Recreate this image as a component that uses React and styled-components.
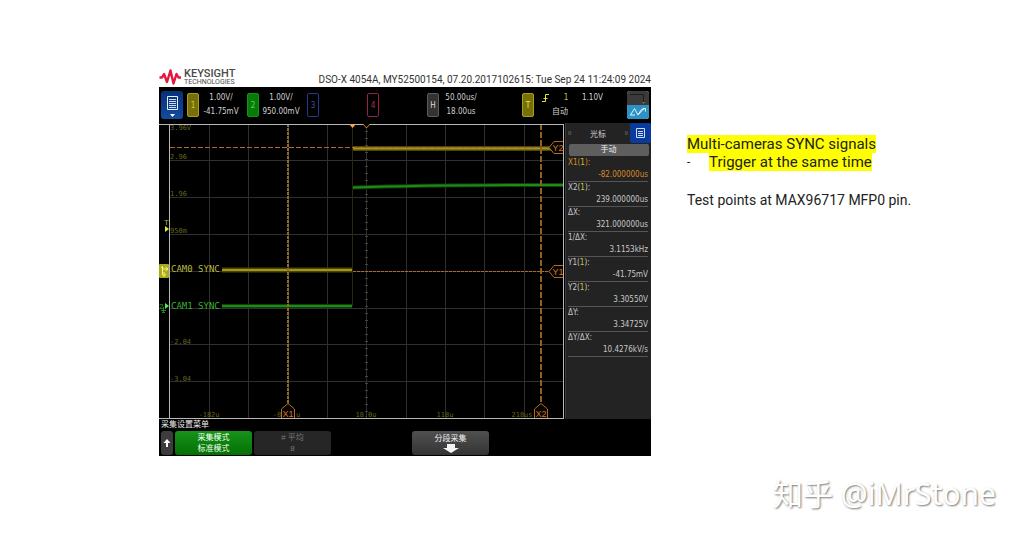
import React from "react";
import styled, { createGlobalStyle } from "styled-components";

const yLabels = [
  { y: 130, text: "3.96V" },
  { y: 159, text: "2.96" },
  { y: 196, text: "1.96" },
  { y: 233, text: "950m" },
  { y: 344, text: "-2.04" },
  { y: 381, text: "-3.04" },
];

/* the second label is cut by the X1 flag */
const xLabels = [
  { x: 209, text: "-182u" },
  { x: 277, text: "-8" },
  { x: 298, text: "u" },
  { x: 366, text: "18.0u" },
  { x: 445, text: "118u" },
  { x: 522, text: "218us" },
];

const measures = [
  { name: "X1", channel: true, value: "-82.000000us", active: true },
  { name: "X2", channel: true, value: "239.000000us" },
  { name: "ΔX", value: "321.000000us" },
  { name: "1/ΔX", value: "3.1153kHz" },
  { name: "Y1", channel: true, value: "-41.75mV" },
  { name: "Y2", channel: true, value: "3.30550V" },
  { name: "ΔY", value: "3.34725V" },
  { name: "ΔY/ΔX", value: "10.4276kV/s" },
];

const Waveform = () => (
  <StPlot viewBox="159 123 406 296" role="img" aria-label="CAM0 / CAM1 SYNC">
    {/* grid */}
    <g stroke="#2f2f2f">
      {[209, 248, 288, 327, 366, 406, 445, 484, 524].map((x) => (
        <path key={x} d={`M${x}.5 124V418`} />
      ))}
      {[160, 197, 234, 271, 308, 344, 381].map((y) => (
        <path key={y} d={`M170 ${y}.5H563`} />
      ))}
    </g>
    <path d="M366.5 124V418" stroke="#444" strokeWidth="3" strokeDasharray="1 6" />
    <path d="M352.5 124V306" stroke="#2c2610" />

    {/* axis labels */}
    <g fill="#66661a" fontSize="7" fontFamily='"DejaVu Sans Mono", monospace'>
      {yLabels.map(({ y, text }) => (
        <text key={text} x="170" y={y}>
          {text}
        </text>
      ))}
      {xLabels.map(({ x, text }) => (
        <text key={text} x={x} y="417" textAnchor="middle">
          {text}
        </text>
      ))}
    </g>

    {/* channel 1 */}
    <g fill="none" stroke="#4d4708" strokeWidth="5">
      <path d="M222 270H352M353 148.500H556" />
    </g>
    <g fill="none" stroke="#a2951d" strokeWidth="2">
      <path d="M222 270H352M353 148.500H556" />
    </g>

    {/* channel 2 */}
    <g fill="none" stroke="#0d4209" strokeWidth="4">
      <path d="M222 306H352M353 187.500C400 186 460 185 563 185" />
    </g>
    <g fill="none" stroke="#1f8a18" strokeWidth="2">
      <path d="M222 306H352M353 187.500C400 186 460 185 563 185" />
    </g>

    {/* cursors */}
    <g stroke="#b0682a" fill="none">
      <path d="M170 147.500H549" strokeDasharray="5 2" />
      <path d="M353 271.500H549" strokeDasharray="3 1" />
      <path d="M288 124V404" stroke="#8f6c2c" strokeWidth="2" strokeDasharray="3 1" />
      <path d="M541 124V404" stroke="#8f6220" strokeWidth="2" strokeDasharray="6 2" />
    </g>
    <g fill="#080400" stroke="#b56a24">
      <path d="M563 141.500H554L549 147.500L554 153.500H563" />
      <path d="M563 265.500H554L549 271.500L554 277.500H563" />
      <path d="M281.500 418V409L288 403.500L294.500 409V418" />
      <path d="M534.500 418V409L541 403.500L547.500 409V418" />
    </g>
    <g fill="#c8782c" fontSize="9" textAnchor="middle">
      <text x="558" y="151">Y2</text>
      <text x="558" y="275">Y1</text>
      <text x="288" y="417">X1</text>
      <text x="541" y="417">X2</text>
    </g>

    {/* frame and trigger marks */}
    <path d="M159 124.500H564M159 418.500H564" stroke="#b8b8b8" />
    <path d="M169.500 124V419M563.500 124V419" stroke="#b8b8b8" />
    <path d="M349 124H356L352.500 128Z" fill="#f2a64a" />
    <path d="M363 124L366.500 128L370 124" fill="#000" stroke="#c88a3c" />

    {/* level marks */}
    <g fontSize="8">
      <text x="164" y="225" fill="#b5b52e">T</text>
      <path d="M165 226L169 229L165 232Z" fill="#e6e635" />
      <rect x="159" y="264" width="10" height="14" rx="1" fill="#a9a91a" />
      <path
        d="M161 268L162.500 266.500V274M162.500 269H168M165.500 267L168 269L165.500 271M164 272V276M162 274L164 276.500L166 274"
        fill="none"
        stroke="#f4f48a"
      />
      <text x="159" y="309" fill="#2ca42c">2</text>
      <path d="M165 303L169 306L165 309Z" fill="#59e659" />
      <path d="M163.500 307V312M161 310.500H166M162 312.500H165" stroke="#1f8a1f" fill="none" />
    </g>
    <g fontSize="9" fontFamily='"DejaVu Sans Mono", monospace'>
      <text x="171" y="272" fill="#b8b83c">CAM0 SYNC</text>
      <text x="171" y="309" fill="#34b034">CAM1 SYNC</text>
    </g>
  </StPlot>
);

const App = () => {
  return (
    <>
      <GlobalStyle />
      <StPage>
        <StSlide>
          <StScope>
            <StBrandBar>
              <StBrand>
                <svg width="22" height="16" viewBox="0 0 22 16" aria-hidden="true">
                  <path
                    d="M0.500 8.500H3L5 5L8 13L11.500 1.500L14.500 14.500L17.500 5L19.500 8.500H22"
                    fill="none"
                    stroke="#e2183f"
                    strokeWidth="2.400"
                    strokeLinejoin="round"
                  />
                </svg>
                <StBrandText>
                  <StBrandName>KEYSIGHT</StBrandName>
                  <StBrandSub>TECHNOLOGIES</StBrandSub>
                </StBrandText>
              </StBrand>
              <StSerial>
                DSO-X 4054A, MY52500154, 07.20.2017102615: Tue Sep 24 11:24:09 2024
              </StSerial>
            </StBrandBar>

            <StScreen>
              <StStatusBar>
                <StMenuBtn aria-label="menu">
                  <svg width="22" height="28" viewBox="0 0 22 28" aria-hidden="true">
                    <path d="M6.500 5.500H16.500V18.500H6.500Z" fill="none" stroke="#e8f0ff" />
                    <path
                      d="M8 8.500H15M8 10.500H15M8 12.500H15M8 14.500H15M8 16.500H15"
                      stroke="#cfdcf5"
                    />
                    <path d="M9 23H14L11.500 26Z" fill="#fff" />
                  </svg>
                </StMenuBtn>
                <StChannel $bg="#77700a" $line="#a8a01c" $color="#cfc92c">1</StChannel>
                <StReading>
                  <span>1.00V/</span>
                  <span>-41.75mV</span>
                </StReading>
                <StChannel $bg="#077a07" $line="#149414" $color="#58d858">2</StChannel>
                <StReading>
                  <span>1.00V/</span>
                  <span>950.00mV</span>
                </StReading>
                <StChannel $line="#26388c" $color="#3a50b0">3</StChannel>
                <StSpace $width="44px" />
                <StChannel $line="#96204c" $color="#b02a5c">4</StChannel>
                <StSpace $width="44px" />
                <StChannel $bg="#333" $line="#5c5c5c" $color="#ddd">H</StChannel>
                <StReading>
                  <span>50.00us/</span>
                  <span>18.00us</span>
                </StReading>
                <StSpace />
                <StChannel $bg="#77700a" $line="#a8a01c" $color="#e6e635">T</StChannel>
                <StTrigger>
                  <svg width="8" height="10" viewBox="0 0 8 10" aria-label="rising edge">
                    <path
                      d="M0 8.500H3.500V1.500H7M1.500 5.500H5.500"
                      fill="none"
                      stroke="#e6e635"
                    />
                  </svg>
                  <StTriggerSource>1</StTriggerSource>
                  <span>1.10V</span>
                  <StTriggerMode>自动</StTriggerMode>
                </StTrigger>
                <StViewBtn aria-label="view">
                  <svg width="22" height="28" viewBox="0 0 22 28" aria-hidden="true">
                    <path d="M0 0H22V14H0Z" fill="#3a3a3a" />
                    <path d="M3 3.500H16.500V11" fill="none" stroke="#1c1c1c" />
                    <path d="M15 11L18 11L16.500 13Z" fill="#8a7430" />
                    <path d="M0 14H22V28H0Z" fill="#2e93c4" />
                    <path
                      d="M3.500 24L7.500 17.500L11 24L14 19L18 17.500M3 24H8M11 24L16.500 18M15.500 17.500H18.500V20.500"
                      fill="none"
                      stroke="#d8f2ff"
                    />
                  </svg>
                </StViewBtn>
              </StStatusBar>

              <StMain>
                <Waveform />
                <StSide>
                  <StSideHead>
                    <StSideTitle>
                      <StGrip>II</StGrip>
                      <span>光标</span>
                      <StGrip>II</StGrip>
                    </StSideTitle>
                    <StListBtn aria-label="list">
                      <svg width="10" height="10" viewBox="0 0 10 10" aria-hidden="true">
                        <path
                          d="M0.500 0.500H8.500V9.500H0.500ZM2 3.500H7M2 5.500H7M2 7.500H7"
                          fill="none"
                          stroke="#cfdcff"
                        />
                      </svg>
                    </StListBtn>
                  </StSideHead>
                  <StModeBtn>手动</StModeBtn>
                  <StMeasures>
                    {measures.map(({ name, channel, value, active }) => (
                      <StMeasure key={name} $active={active}>
                        <dt>
                          {name}
                          {channel && (
                            <>
                              (<StChannelNo>1</StChannelNo>)
                            </>
                          )}
                          :
                        </dt>
                        <dd>{value}</dd>
                      </StMeasure>
                    ))}
                  </StMeasures>
                </StSide>
              </StMain>

              <StMenuTitle>采集设置菜单</StMenuTitle>
              <StSoftKeys>
                <StUpKey aria-label="up">
                  <svg width="8" height="8" viewBox="0 0 8 8" aria-hidden="true">
                    <path d="M4 0L7.500 4H5V8H3V4H0.500Z" fill="#fff" />
                  </svg>
                </StUpKey>
                <StSoftKey $variant="on">
                  <span>采集模式</span>
                  <span>标准模式</span>
                </StSoftKey>
                <StSoftKey $variant="off">
                  <span># 平均</span>
                  <span>8</span>
                </StSoftKey>
                <StEmptyKey />
                <StSoftKey>
                  <span>分段采集</span>
                  <svg width="16" height="9" viewBox="0 0 16 9" aria-hidden="true">
                    <path d="M4 0H12V4H16L8 9L0 4H4Z" fill="#f4f4f4" />
                  </svg>
                </StSoftKey>
              </StSoftKeys>
            </StScreen>
          </StScope>

          <StNotes>
            <p>
              <StMark>Multi-cameras SYNC signals</StMark>
            </p>
            <StNoteItem>
              <StDash>-</StDash>
              <StMark>Trigger at the same time</StMark>
            </StNoteItem>
            <StNoteText>Test points at MAX96717 MFP0 pin.</StNoteText>
          </StNotes>
        </StSlide>
        <StWatermark>知乎 @iMrStone</StWatermark>
      </StPage>
    </>
  );
};

export default App;

const GlobalStyle = createGlobalStyle`
  * {
    box-sizing: border-box;
    margin: 0;
    padding: 0;
  }

  body {
    background: #fff;
    font-family: "Liberation Sans", "Noto Sans CJK SC", sans-serif;
  }

  button {
    border: none;
    font: inherit;
    cursor: pointer;
  }

  svg {
    display: block;
  }
`;

const StPage = styled.div`
  padding: 66px 24px 0 159px;
`;

const StSlide = styled.div`
  display: grid;
  grid-template-columns: minmax(0, 492px) 1fr;
  column-gap: 36px;
`;

const StScope = styled.section`
  color: #d2d2d2;
`;

const StBrandBar = styled.header`
  height: 21px;
  display: flex;
  justify-content: space-between;
  align-items: center;
`;

const StBrand = styled.div`
  display: flex;
  align-items: center;
  column-gap: 3px;
`;

const StBrandText = styled.div`
  display: flex;
  flex-flow: column;
  color: #4a4a4a;
`;

const StBrandName = styled.b`
  font: 500 11px/10px Roboto, sans-serif;
`;

const StBrandSub = styled.span`
  font: 400 7px/6px Roboto, sans-serif;
`;

const StSerial = styled.p`
  align-self: flex-end;
  color: #333;
  font-family: Roboto, sans-serif;
  font-size: 10px;
  line-height: 14px;
  white-space: nowrap;
`;

const StScreen = styled.div`
  background: #000;
`;

const StStatusBar = styled.div`
  height: 36px;
  display: flex;
  align-items: center;
  padding: 0 2px;
  font-family: "DejaVu Sans Condensed", "Noto Sans", "Noto Sans CJK SC", sans-serif;
  font-size: 8px;
`;

const StMenuBtn = styled.button`
  border-radius: 3px;
  background: linear-gradient(#0b2f78, #124ba0);
`;

const StChannel = styled.button`
  width: 12px;
  height: 24px;
  flex: none;
  margin-left: 4px;
  border: 1px solid ${({ $line }) => $line};
  border-radius: 2px;
  background: ${({ $bg }) => $bg || "#000"};
  color: ${({ $color }) => $color};
`;

const StReading = styled.div`
  width: 44px;
  display: flex;
  flex-flow: column;
  align-items: center;
  line-height: 14px;
`;

const StSpace = styled.div`
  flex: ${({ $width }) => ($width ? `0 1 ${$width}` : "1")};
`;

const StTrigger = styled.div`
  width: 93px;
  display: grid;
  grid-template-columns: 8px 32px 1fr;
  padding-left: 8px;
  align-items: center;
  line-height: 14px;
`;

const StTriggerSource = styled.span`
  color: #b5c83a;
  text-align: center;
`;

const StTriggerMode = styled.span`
  grid-column: 1 / -1;
  padding-left: 10px;
`;

const StViewBtn = styled.button`
  border-radius: 3px;
  overflow: hidden;
`;

const StMain = styled.div`
  display: grid;
  grid-template-columns: minmax(0, 1fr) 86px;
`;

const StPlot = styled.svg`
  width: 100%;
`;

const StSide = styled.aside`
  background: #232323;
  border-left: 1px solid #3c3c3c;
`;

const StSideHead = styled.div`
  height: 20px;
  display: flex;
`;

const StSideTitle = styled.div`
  flex: 1;
  display: flex;
  justify-content: space-between;
  align-items: center;
  padding: 0 2px;
  font-size: 8px;
`;

const StGrip = styled.span`
  color: #777;
  font-size: 6px;
`;

const StListBtn = styled.button`
  width: 21px;
  display: flex;
  justify-content: center;
  align-items: center;
  border-radius: 2px;
  background: #0a3a9c;
`;

const StModeBtn = styled.button`
  width: 80px;
  height: 12px;
  display: block;
  margin: 1px auto 0;
  border-radius: 2px;
  background: #5e5e5e;
  color: #f0f0f0;
  font-size: 8px;
  line-height: 12px;
`;

const StMeasures = styled.dl`
  padding: 1px 3px 0 2px;
  font-family: "DejaVu Sans Condensed", "Noto Sans", sans-serif;
  font-size: 8px;
  line-height: 12px;
`;

const StMeasure = styled.div`
  height: 25px;
  border-bottom: 1px solid #555;
  color: ${({ $active }) => ($active ? "#d88a24" : "#c8c8c8")};

  dd {
    text-align: right;
  }
`;

const StChannelNo = styled.span`
  color: #c8c82e;
`;

const StMenuTitle = styled.p`
  padding: 0 2px;
  color: #eee;
  font-size: 8px;
  line-height: 12px;
`;

const StSoftKeys = styled.div`
  display: grid;
  grid-template-columns: 12px repeat(6, 77px);
  column-gap: 2px;
  padding: 0 2px 1px;
  overflow: hidden;
`;

const StUpKey = styled.button`
  height: 24px;
  display: flex;
  justify-content: center;
  align-items: center;
  border-radius: 3px;
  background: #3c3c3c;
`;

const keyColors = {
  on: { bg: "linear-gradient(#17921a, #047004)", color: "#f4fff4" },
  off: { bg: "#262626", color: "#777" },
  normal: { bg: "linear-gradient(#505050, #343434)", color: "#f0f0f0" },
};

const StSoftKey = styled.button`
  height: 24px;
  display: flex;
  flex-flow: column;
  justify-content: center;
  align-items: center;
  border-radius: 3px;
  background: ${({ $variant = "normal" }) => keyColors[$variant].bg};
  color: ${({ $variant = "normal" }) => keyColors[$variant].color};
  font-size: 8px;
  line-height: 11px;
`;

const StEmptyKey = styled.div`
  height: 24px;
`;

const StNotes = styled.section`
  padding-top: 69px;
  color: #222;
  font-family: Roboto, sans-serif;
  font-size: 15px;
  line-height: 18px;
`;

const StNoteItem = styled.p`
  display: flex;
`;

const StDash = styled.span`
  width: 22px;
  font-size: 12px;
`;

const StMark = styled.mark`
  display: inline-block;
  background: #ff0;
  color: #222;
`;

const StNoteText = styled.p`
  margin-top: 20px;
  font-size: 14px;
`;

const StWatermark = styled.footer`
  padding-top: 20px;
  color: #fff;
  font-family: "Noto Sans", "Noto Sans CJK SC", sans-serif;
  font-size: 30px;
  line-height: 36px;
  text-align: right;
  text-shadow: 1px 1px 2px #777;
`;
